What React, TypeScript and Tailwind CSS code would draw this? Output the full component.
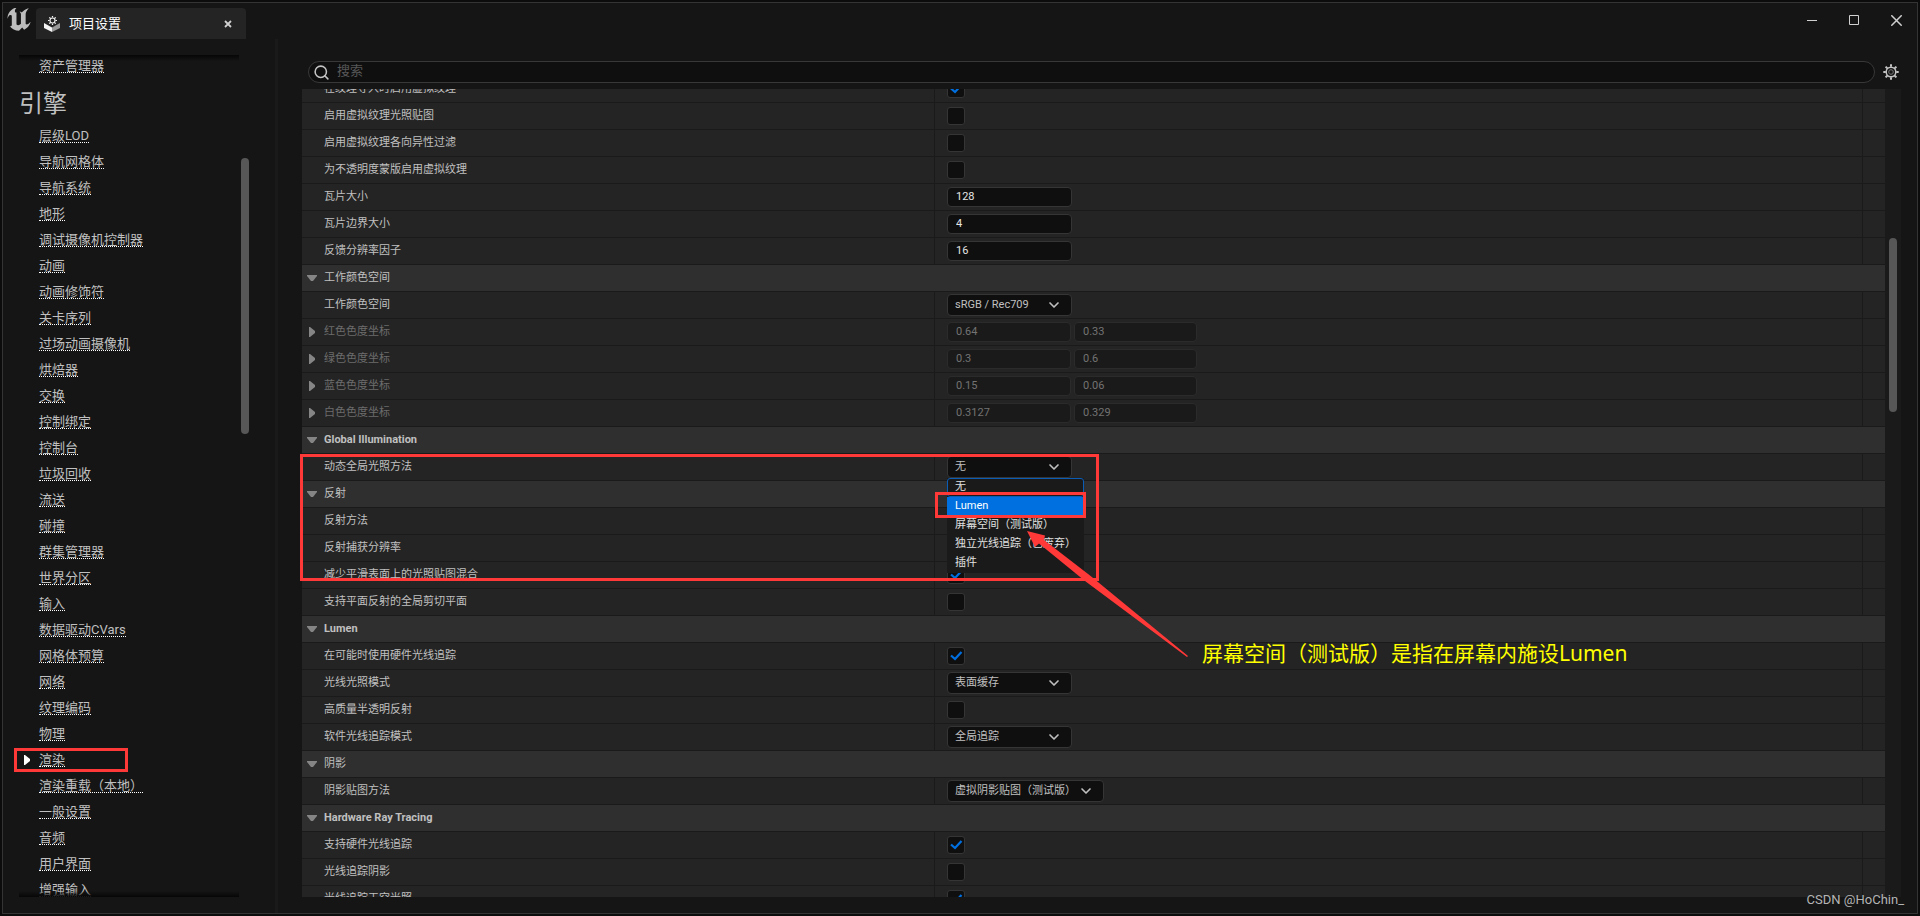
import React, { useState } from 'react';
import { ChevronDown, Search } from 'lucide-react';

type Field =
  | { kind: 'check'; on: boolean }
  | { kind: 'text'; value: string }
  | { kind: 'pair'; a: string; b: string }
  | { kind: 'select'; options: string[]; open?: boolean; wide?: boolean }
  | { kind: 'blank' };

type Row = { label: string; header?: boolean; bold?: boolean; field?: Field };

const check = (label: string, on = false): Row => ({ label, field: { kind: 'check', on } });
const text = (label: string, value: string): Row => ({ label, field: { kind: 'text', value } });
const pair = (label: string, a: string, b: string): Row => ({ label, field: { kind: 'pair', a, b } });
const header = (label: string, bold = false): Row => ({ label, header: true, bold });

const giMethods = ['无', 'Lumen', '屏幕空间（测试版）', '独立光线追踪（已废弃）', '插件'];

const rows: Row[] = [
  check('在纹理导入时启用虚拟纹理', true),
  check('启用虚拟纹理光照贴图'),
  check('启用虚拟纹理各向异性过滤'),
  check('为不透明度蒙版启用虚拟纹理'),
  text('瓦片大小', '128'),
  text('瓦片边界大小', '4'),
  text('反馈分辨率因子', '16'),
  header('工作颜色空间'),
  { label: '工作颜色空间', field: { kind: 'select', options: ['sRGB / Rec709'] } },
  pair('红色色度坐标', '0.64', '0.33'),
  pair('绿色色度坐标', '0.3', '0.6'),
  pair('蓝色色度坐标', '0.15', '0.06'),
  pair('白色色度坐标', '0.3127', '0.329'),
  header('Global Illumination', true),
  { label: '动态全局光照方法', field: { kind: 'select', options: giMethods, open: true } },
  header('反射'),
  { label: '反射方法', field: { kind: 'blank' } },
  { label: '反射捕获分辨率', field: { kind: 'blank' } },
  check('减少平滑表面上的光照贴图混合', true),
  check('支持平面反射的全局剪切平面'),
  header('Lumen', true),
  check('在可能时使用硬件光线追踪', true),
  { label: '光线光照模式', field: { kind: 'select', options: ['表面缓存'] } },
  check('高质量半透明反射'),
  { label: '软件光线追踪模式', field: { kind: 'select', options: ['全局追踪'] } },
  header('阴影'),
  { label: '阴影贴图方法', field: { kind: 'select', options: ['虚拟阴影贴图（测试版）'], wide: true } },
  header('Hardware Ray Tracing', true),
  check('支持硬件光线追踪', true),
  check('光线追踪阴影'),
  check('光线追踪天空光照', true),
];

const sections = [
  '层级LOD', '导航网格体', '导航系统', '地形', '调试摄像机控制器', '动画', '动画修饰符', '关卡序列',
  '过场动画摄像机', '烘焙器', '交换', '控制绑定', '控制台', '垃圾回收', '流送', '碰撞', '群集管理器',
  '世界分区', '输入', '数据驱动CVars', '网格体预算', '网络', '纹理编码', '物理', '渲染',
  '渲染重载（本地）', '一般设置', '音频', '用户界面', '增强输入',
];

const UnrealLogo = () => (
  <svg viewBox="4.5 5.2 14.8 14.3" className="h-[23px] w-6" fill="#bdbdbd" aria-hidden="true">
    <path d="M19.13 13.729c-.206.997-1.126 3.557-4.06 4.942l-1.179-1.325-1.988 2a7.338 7.338 0 01-5.804-2.978 2.859 2.859 0 00.65.123c.326.006.678-.114.678-.66v-5.394a.89.89 0 00-1.116-.89c-.92.212-1.656 2.509-1.656 2.509a7.304 7.304 0 012.528-5.597 7.408 7.408 0 013.73-1.721c-1.006.573-1.57 1.507-1.57 2.29 0 1.262.76 1.109.984.923v7.28a1.157 1.157 0 00.148.256 1.075 1.075 0 00.88.445c.76 0 1.747-.868 1.747-.868V9.172c0-.6-.452-1.324-.905-1.572 0 0 .838-.149 1.484.346a5.537 5.537 0 01.387-.425c1.508-1.48 2.929-1.902 4.112-2.112 0 0-2.151 1.69-2.151 3.96 0 1.687.043 5.801.043 5.801.799.771 1.986-.342 3.059-1.441z" />
  </svg>
);

const SettingsBoxIcon = () => (
  <svg viewBox="0 0 16 16" className="size-4" aria-hidden="true">
    <path d="M0 7l8 4.500V16L0 12z" fill="#f4f4f4" />
    <path d="M16 7l-8 4.500V16l8-4z" fill="#9a9a9a" />
    <circle cx="8.500" cy="4.500" r="2.500" fill="none" stroke="#f4f4f4" strokeWidth="1.100" />
    <g stroke="#f4f4f4" strokeWidth="1.200">
      <path d="M8.500 0v1.600M8.500 7.400V9M4 4.500h1.600M11.400 4.500H13M5.300 1.300l1.200 1.200M10.500 6.500l1.200 1.200M11.700 1.300l-1.200 1.200M6.500 6.500L5.300 7.700" />
    </g>
  </svg>
);

const GearIcon = () => (
  <svg viewBox="0 0 16 16" className="size-4" fill="none" stroke="#c4c4c4" aria-hidden="true">
    <circle cx="8" cy="8" r="4.800" strokeWidth="1.500" />
    <circle cx="8" cy="8" r="2.300" stroke="#777" />
    <path
      strokeWidth="2"
      d="M8 .3v2.500M8 13.200v2.500M.3 8h2.500M13.200 8h2.500M2.600 2.600l1.700 1.700M11.700 11.700l1.700 1.700M13.400 2.600l-1.700 1.700M4.300 11.700l-1.700 1.700"
    />
  </svg>
);

const CheckBox: React.FC<{ id: string; on: boolean }> = ({ id, on }) => (
  <span className="relative size-[18px]">
    <input
      id={id}
      type="checkbox"
      defaultChecked={on}
      className="peer block size-[18px] appearance-none rounded-[3px] border border-[#353535] bg-[#0f0f0f]"
    />
    <svg viewBox="0 0 18 18" className="pointer-events-none absolute inset-0 hidden peer-checked:block" aria-hidden="true">
      <path d="M4 8.500L8 12l6.500-7" fill="none" stroke="#0070e0" strokeWidth="2.200" />
    </svg>
  </span>
);

const MethodMenu: React.FC<{ options: string[] }> = ({ options }) => (
  <div className="absolute top-[22px] left-0 z-10 w-[137px] bg-[#1a1a1a]">
    <ul role="listbox" className="text-[#e0e0e0]">
      {options.map((o, i) => (
        <li
          key={o}
          role="option"
          aria-selected={i === 1}
          className={
            i === 0
              ? 'flex h-[19px] items-center rounded-[3px] border border-[#0a5cb4] pl-[7px] whitespace-nowrap'
              : i === 1
                ? 'flex h-[19px] items-center bg-[#0070e0] pl-2 whitespace-nowrap text-white'
                : 'flex h-[19px] items-center pl-2 whitespace-nowrap'
          }
        >
          {o}
        </li>
      ))}
    </ul>
    {/* highlight around the Lumen entry */}
    <div className="absolute top-[14px] -left-3 h-[26px] w-[151px] border-3 border-[#ff3838]"></div>
  </div>
);

const FieldView: React.FC<{ id: string; label: string; field: Field }> = ({ id, label, field }) => {
  if (field.kind === 'check') return <CheckBox id={id} on={field.on} />;
  if (field.kind === 'text')
    return (
      <input
        id={id}
        type="text"
        defaultValue={field.value}
        className="h-5 w-[125px] rounded-[4px] border border-[#353535] bg-[#0f0f0f] px-2 pb-0.5 text-[#e4e4e4]"
      />
    );
  if (field.kind === 'pair')
    return (
      <div className="flex gap-[3px]">
        <input
          id={id}
          type="text"
          disabled
          defaultValue={field.a}
          className="h-5 w-[124px] rounded-[4px] border border-[#2b2b2b] bg-[#1a1a1a] px-2 pb-0.5 text-[#737373]"
        />
        <input
          type="text"
          disabled
          aria-label={label + ' Y'}
          defaultValue={field.b}
          className="h-5 w-[123px] rounded-[4px] border border-[#2b2b2b] bg-[#1a1a1a] px-2 pb-0.5 text-[#737373]"
        />
      </div>
    );
  if (field.kind === 'select')
    return (
      <div className={field.wide ? 'relative w-[157px]' : 'relative w-[125px]'}>
        <select
          id={id}
          className="block h-[22px] w-full appearance-none rounded-[4px] border border-[#353535] bg-[#0f0f0f] pl-[7px] text-[#c0c0c0]"
        >
          {field.options.map((o) => (
            <option key={o}>{o}</option>
          ))}
        </select>
        <ChevronDown className="pointer-events-none absolute top-[3px] right-[10px] size-4 text-[#c0c0c0]" strokeWidth={2.5} />
        {field.open && <MethodMenu options={field.options} />}
      </div>
    );
  return null;
};

const DownTriangle = () => (
  <svg viewBox="0 0 10 6" className="h-1.5 w-2.5" fill="#858585" aria-hidden="true">
    <path d="M0 0h10v1L6 6H4L0 1z" />
  </svg>
);

const DetailRow: React.FC<{ row: Row; id: string }> = ({ row, id }) => {
  if (row.header)
    return (
      <h2 className="flex h-[27px] items-center gap-[7px] border-b border-[#1a1a1a] bg-[#2f2f2f] pl-[5px] text-[#c0c0c0]">
        <DownTriangle />
        <span className={row.bold ? 'font-bold' : 'font-normal'}>{row.label}</span>
      </h2>
    );
  const dim = row.field?.kind === 'pair';
  return (
    <div className="flex h-[27px] border-b border-[#1a1a1a] bg-[#242424]">
      <div className="flex w-[632px] shrink-0 items-center pl-[7px]">
        <span className="w-[15px]">
          {dim && (
            <svg viewBox="0 0 6 10" className="h-2.5 w-1.5" fill="#858585" aria-hidden="true">
              <path d="M0 0h1l5 4v2l-5 4H0z" />
            </svg>
          )}
        </span>
        <label htmlFor={id} className={dim ? 'text-[#6c6c6c]' : 'text-[#c0c0c0]'}>
          {row.label}
        </label>
      </div>
      <div className="flex flex-1 items-center border-x border-[#1a1a1a] pl-3">
        {row.field && <FieldView id={id} label={row.label} field={row.field} />}
      </div>
      <div className="w-[22px]"></div>
    </div>
  );
};

const SideLink: React.FC<{ label: string; active?: boolean }> = ({ label, active }) => (
  <li className="relative flex h-[26px] items-start pt-1 pl-9">
    {active && (
      <>
        <svg viewBox="0 0 6 10" className="absolute top-[6px] left-[21px] h-2.5 w-1.5" fill="#fff" aria-hidden="true">
          <path d="M0 0h1l5 4v2l-5 4H0z" />
        </svg>
        <span className="absolute -top-px left-[11px] h-6 w-[114px] border-3 border-[#ff3838]"></span>
      </>
    )}
    <a href="#" className="border-b border-dotted border-white text-[13px] leading-[13px] text-[#c0c0c0]">
      {label}
    </a>
  </li>
);

const Sidebar = () => (
  <aside className="flex w-[272px] shrink-0 pt-4 pb-4">
    <nav className="relative flex-1 overflow-hidden">
      <ul>
        <SideLink label="资产管理器" />
      </ul>
      <h1 className="flex h-11 items-center pt-0.5 pl-4 text-[24px] leading-none text-[#c0c0c0]">引擎</h1>
      <ul>
        {sections.map((s) => (
          <SideLink key={s} label={s} active={s === '渲染'} />
        ))}
      </ul>
      {/* scroll shadows */}
      <div className="absolute top-0 right-0 left-4 h-1.5 rounded-[50%_50%_0_0/0] bg-linear-to-b from-[#060606] to-transparent"></div>
      <div className="absolute right-0 bottom-0 left-4 h-1.5 bg-linear-to-t from-[#060606] to-transparent"></div>
    </nav>
    <div className="mr-[26px] ml-0.5 w-2 pt-[103px]">
      <div className="h-[276px] rounded-full bg-[#575757]"></div>
    </div>
  </aside>
);

const Annotations = () => (
  <>
    <div className="pointer-events-none absolute top-[365px] -left-0.5 z-20 h-[127px] w-[799px] border-3 border-[#ff3838]"></div>
    <svg viewBox="0 0 161 126" className="pointer-events-none absolute top-[442px] left-[725px] z-20 h-[126px] w-[161px]" fill="#ff3838" aria-hidden="true">
      <path d="M0 0L18 4.500L17 9L63 44.500L161 125L160 126L58 50L12 12.500L8 16z" />
    </svg>
    <p className="absolute top-[550px] left-[900px] z-20 font-['Noto_Sans','Noto_Sans_CJK_SC',sans-serif] text-[21px] leading-7 whitespace-nowrap text-[#ffff00]">
      屏幕空间（测试版）是指在屏幕内施设Lumen
    </p>
  </>
);

export default function App() {
  const [query, setQuery] = useState('');

  return (
    <div className="relative h-screen overflow-hidden bg-[#0c0c0c] p-0.5 font-['Roboto','Noto_Sans_CJK_SC',sans-serif] text-[11px]">
      <div className="flex h-full flex-col border border-[#343434] bg-[#151515]">
        <header className="flex h-9 shrink-0 items-end">
          <div className="flex h-full w-[33px] items-start pt-[5px] pl-1">
            <UnrealLogo />
          </div>
          <div className="flex h-[31px] w-[210px] items-center rounded-t-[4px] bg-[#242424] pr-[14px] pl-2">
            <SettingsBoxIcon />
            <span className="ml-[9px] flex-1 text-[13px] text-white">项目设置</span>
            <button aria-label="关闭标签" className="flex size-2">
              <svg viewBox="0 0 8 8" className="size-2" stroke="#d0d0d0" strokeWidth="1.800" aria-hidden="true">
                <path d="M1 1l6 6M7 1L1 7" />
              </svg>
            </button>
          </div>
          <div className="mr-[15px] ml-auto flex h-full items-center gap-[31px] pb-0.5">
            <button aria-label="最小化">
              <svg viewBox="0 0 11 11" className="size-[11px]" stroke="#d0d0d0" aria-hidden="true">
                <path d="M0 5.500h10" />
              </svg>
            </button>
            <button aria-label="最大化">
              <svg viewBox="0 0 11 11" className="size-[11px]" fill="none" stroke="#d0d0d0" aria-hidden="true">
                <path d="M.5.5h9v9h-9z" />
              </svg>
            </button>
            <button aria-label="关闭">
              <svg viewBox="0 0 11 11" className="size-[11px]" stroke="#d0d0d0" strokeWidth="1.500" aria-hidden="true">
                <path d="M.3.3l10.400 10.400M10.700.3L.3 10.700" />
              </svg>
            </button>
          </div>
        </header>

        <div className="flex min-h-0 flex-1">
          <Sidebar />
          <div className="w-[3px] shrink-0 bg-[#1a1a1a]"></div>
          <main className="flex min-w-0 flex-1 flex-col pt-[22px] pr-4 pb-4 pl-6">
            <div className="mb-1.5 flex items-center gap-2 pl-1.5">
              <label className="flex h-[22px] flex-1 items-center gap-[7px] rounded-full border border-[#383838] bg-[#0f0f0f] pl-1">
                <Search className="size-[17px] text-[#c4c4c4]" strokeWidth={2.2} />
                <input
                  type="text"
                  aria-label="搜索"
                  placeholder="搜索"
                  value={query}
                  onChange={(e) => setQuery(e.target.value)}
                  className="min-w-0 flex-1 bg-transparent pb-0.5 text-[13px] leading-4 outline-none placeholder:text-[#575757]"
                />
              </label>
              <button aria-label="设置" className="mr-0.5">
                <GearIcon />
              </button>
            </div>

            <div className="relative flex min-h-0 flex-1">
              <div className="flex-1 overflow-hidden">
                <div className="-mt-[13px]">
                  {rows.map((row, i) => (
                    <DetailRow key={i} id={'row-' + i} row={row} />
                  ))}
                </div>
              </div>
              <div className="w-4 bg-[#1a1a1a] px-1 pt-[149px]">
                <div className="h-[174px] rounded-full bg-[#575757]"></div>
              </div>
              <Annotations />
            </div>
          </main>
        </div>
      </div>
      <p className="absolute right-4 bottom-2 z-30 text-[13px] leading-4 text-[#b4b4b4]">CSDN @HoChin_</p>
    </div>
  );
}
